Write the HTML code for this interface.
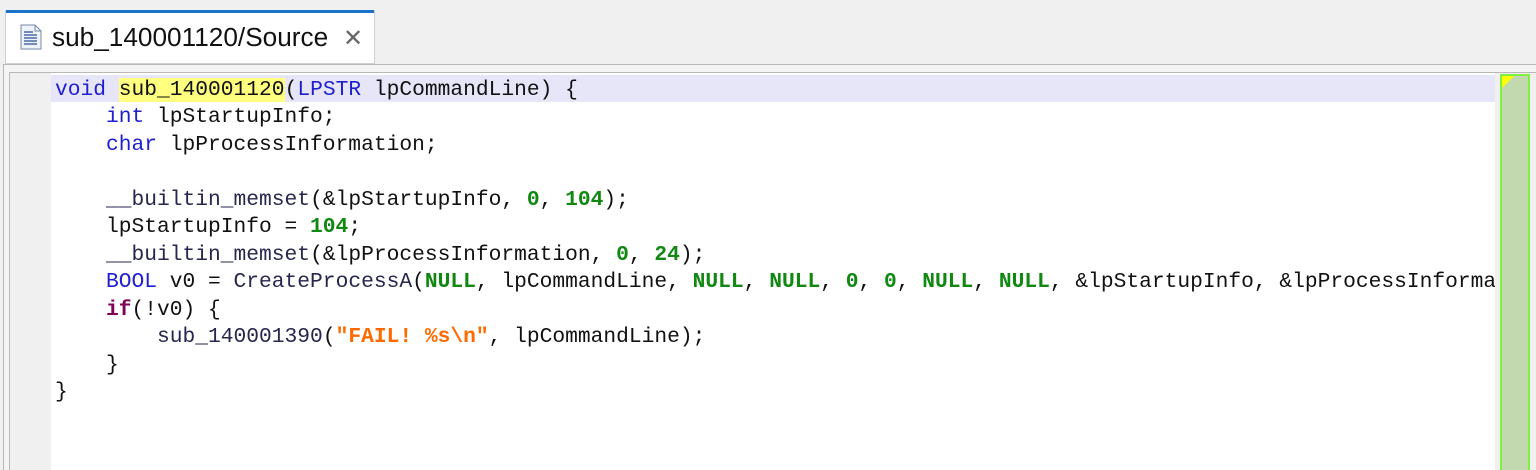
<!DOCTYPE html>
<html><head><style>
html,body{margin:0;width:1536px;height:470px;overflow:hidden}
body{background:#f0f0f0;position:relative;font-family:"Liberation Sans",sans-serif}
.tab{position:absolute;left:5px;top:10px;width:370px;height:54px;background:#fff;border:1px solid #d0d0d0;border-top:none;box-sizing:border-box}
.tab .bar{position:absolute;left:0;top:0;right:0;height:3px;background:#1a73c8}
.tab .t{position:absolute;left:46px;top:12px;font-size:26.2px;color:#111}
.tab .x{position:absolute;left:337px;top:14px;font-size:24px;color:#666}
.frame{position:absolute;left:3px;top:64px;width:1533px;height:420px;border:1px solid #b8b8b8;border-bottom:none;background:#f4f4f4}
.inner{position:absolute;left:9px;top:72px;width:1527px;height:400px;border-left:1px solid #b8b8b8;border-top:1px solid #b8b8b8;background:#f0f0f0}
.code{position:absolute;left:51px;top:73px;width:1444px;height:400px;background:#fff;overflow:hidden}
.hl{position:absolute;left:0;top:2px;width:1444px;height:27px;background:#e6e6f8}
pre{position:absolute;left:4px;top:4px;margin:0;font-family:"Liberation Mono","DejaVu Sans Mono",monospace;font-size:21.25px;line-height:27.45px;color:#111;white-space:pre}
.k{color:#1f1fd0}.p{color:#7f0055;font-weight:bold}.n{color:#118811;font-weight:bold}.s{color:#ff6a00;font-weight:bold}.f{color:#26264e}
.y{background:#ffff80}
.ov{position:absolute;left:1500px;top:74px;width:30px;height:400px;background:#c2d9b0;border:2px solid #80f040;border-bottom:none;box-sizing:border-box}
.tri{position:absolute;left:1502px;top:76px;width:0;height:0;border-top:12px solid #ffff00;border-right:12px solid transparent}
</style></head><body>
<div class="tab"><div class="bar"></div>
<svg style="position:absolute;left:14px;top:14px" width="22" height="26" viewBox="0 0 22 26"><path d="M1 1h14l6 6v18H1z" fill="#eef2fa" stroke="#7a8aa8"/><path d="M15 1v6h6" fill="none" stroke="#7a8aa8"/><g stroke="#4a6aa8" stroke-width="1.5"><path d="M4 8h9M4 11h13M4 14h13M4 17h13M4 20h13"/></g></svg>
<div class="t">sub_140001120/Source</div><div class="x">✕</div></div>
<div class="frame"></div><div class="inner"></div>
<div class="code"><div class="hl"></div>
<pre><span class="k">void</span> <span class="y">sub_140001120</span>(<span class="k">LPSTR</span> lpCommandLine) {
    <span class="k">int</span> lpStartupInfo;
    <span class="k">char</span> lpProcessInformation;

    <span class="f">__builtin_memset</span>(&amp;lpStartupInfo, <span class="n">0</span>, <span class="n">104</span>);
    lpStartupInfo = <span class="n">104</span>;
    <span class="f">__builtin_memset</span>(&amp;lpProcessInformation, <span class="n">0</span>, <span class="n">24</span>);
    <span class="k">BOOL</span> v0 = <span class="f">CreateProcessA</span>(<span class="n">NULL</span>, lpCommandLine, <span class="n">NULL</span>, <span class="n">NULL</span>, <span class="n">0</span>, <span class="n">0</span>, <span class="n">NULL</span>, <span class="n">NULL</span>, &amp;lpStartupInfo, &amp;lpProcessInformation);
    <span class="p">if</span>(!v0) {
        <span class="f">sub_140001390</span>(<span class="s">"FAIL! %s\n"</span>, lpCommandLine);
    }
}</pre></div>
<div class="ov"></div><div class="tri"></div>
</body></html>
